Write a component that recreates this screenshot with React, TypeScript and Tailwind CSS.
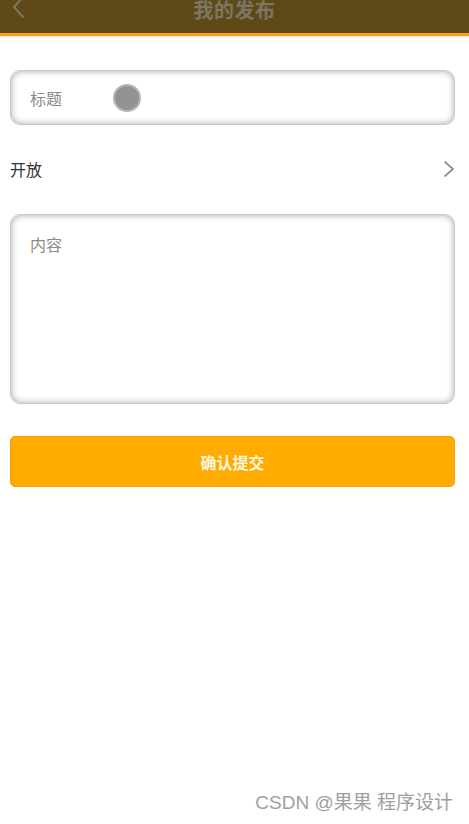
import React from "react";

const font = { fontFamily: '"Noto Sans CJK SC", "Noto Sans", sans-serif' };

export default function App() {
  return (
    <div className="relative min-h-[824px] w-full bg-white" style={font}>
      {/* Header, scrolled so the top is cut */}
      <div className="h-[33px] overflow-hidden bg-[#5f4a17]">
        <div className="relative -mt-[9px] flex h-[38px] items-center justify-center">
          <svg
            className="absolute left-[11px] top-[4px]"
            width="14"
            height="24"
            viewBox="0 0 14 24"
            fill="none"
            stroke="#7d7560"
            strokeWidth="2"
            strokeLinecap="round"
            strokeLinejoin="round"
          >
            <polyline points="12 2 3 12 12 22" />
          </svg>
          <span className="text-[20px] font-bold leading-none tracking-[0.5px] text-[#7b7766]">我的发布</span>
        </div>
      </div>
      <div className="h-[3px] bg-[#f5a418]" />
      <div className="h-px bg-[#fbe7c0]" />

      <div className="pl-[10px] pr-[14px] pt-[33px]">
        {/* Title input */}
        <div className="flex h-[55px] items-center rounded-[10px] border border-[#c8c8c8] pl-[19px] shadow-[inset_0_0_7px_rgba(0,0,0,0.35)]">
          <span className="w-[83px] text-[16px] text-[#8a8a8a]">标题</span>
          <span className="h-[28px] w-[28px] rounded-full border-2 border-[#b5b5b5] bg-[#939393]" />
        </div>

        {/* Visibility row */}
        <div className="mt-[32px] flex items-center justify-between">
          <span className="text-[16px] text-[#333]">开放</span>
          <svg
            width="12"
            height="18"
            viewBox="0 0 12 18"
            fill="none"
            stroke="#8f8f8f"
            strokeWidth="1.8"
            strokeLinecap="round"
            strokeLinejoin="round"
          >
            <polyline points="2 2 10 9 2 16" />
          </svg>
        </div>

        {/* Content textarea */}
        <div className="mt-[33px] h-[190px] rounded-[10px] border border-[#c8c8c8] px-[19px] pt-[17px] shadow-[inset_0_0_7px_rgba(0,0,0,0.35)]">
          <span className="text-[16px] text-[#8a8a8a]">内容</span>
        </div>

        {/* Submit */}
        <button className="mt-[32px] flex h-[51px] w-full items-center justify-center rounded-[5px] border border-[#f5a100] bg-[#ffab00] text-[16px] font-bold text-[#fff6e0]">
          确认提交
        </button>
      </div>

      <div
        className="absolute bottom-[7px] right-[16px] text-[19px] text-[#a0a0a0]"
        style={{ fontFamily: '"Liberation Sans", "Noto Sans CJK SC", sans-serif' }}
      >
        CSDN @果果 程序设计
      </div>
    </div>
  );
}
